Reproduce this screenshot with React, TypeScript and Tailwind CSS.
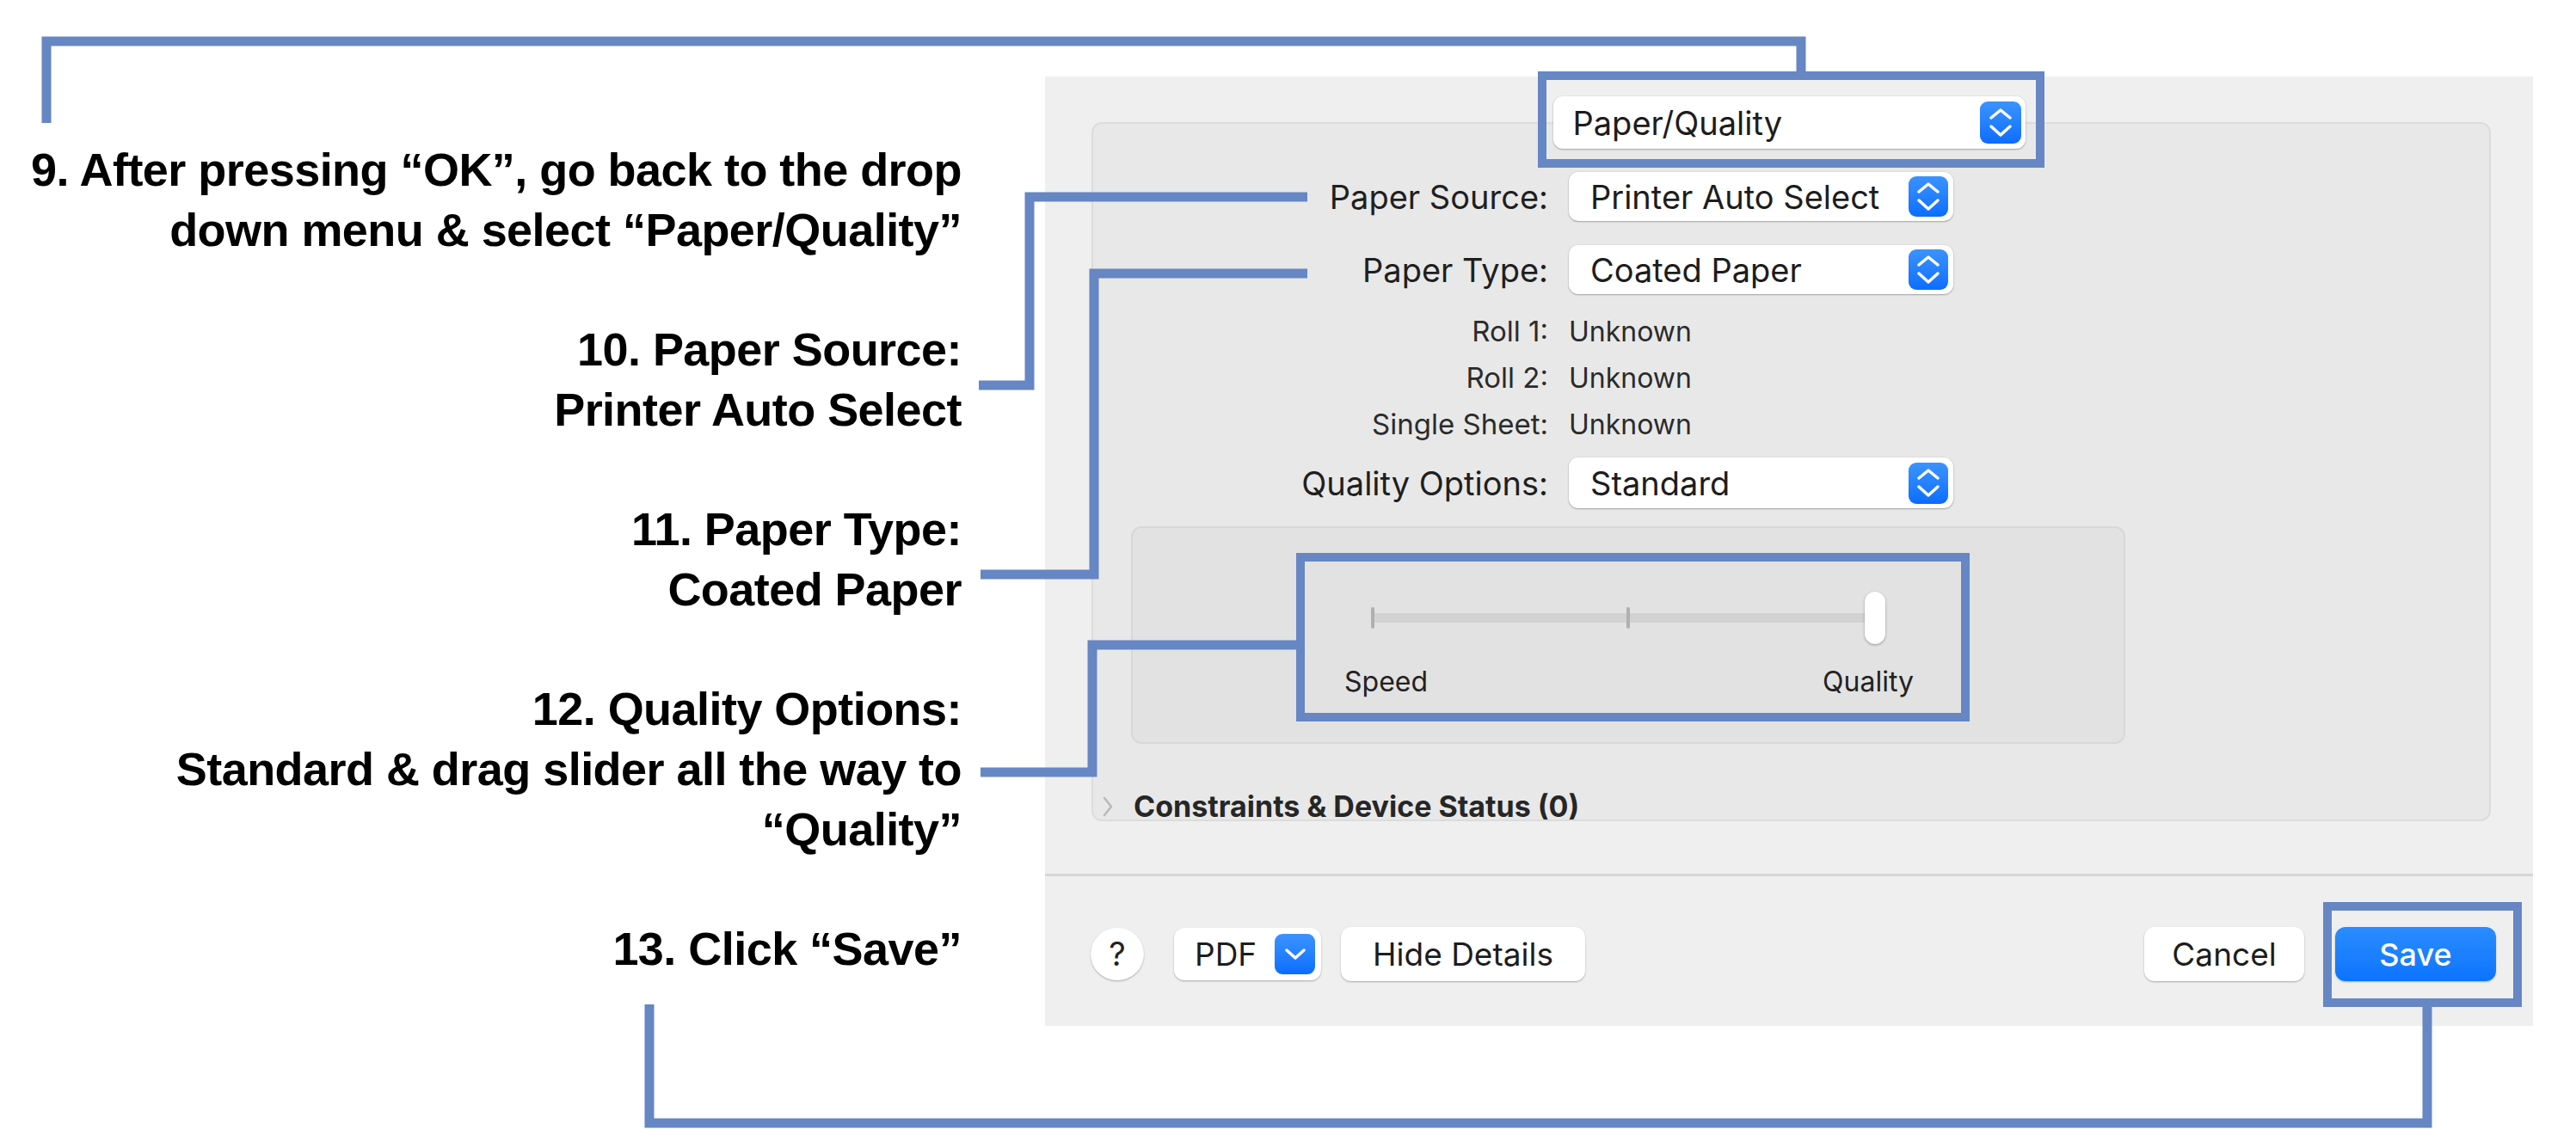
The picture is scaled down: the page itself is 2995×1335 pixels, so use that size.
import React from "react";

const UI = "font-['Inter','Liberation_Sans',sans-serif]";
const NOTE = "font-['Liberation_Sans','Arial',sans-serif]";
const LINE = "#6686c4";

export default function App() {
  return (
    <div className="relative w-[2995px] h-[1335px] bg-white overflow-hidden">
      <div className="flex">
        {/* Annotations */}
        <div
          className={`${NOTE} w-[1118px] shrink-0 pt-[162px] flex flex-col gap-[69px] text-right font-bold text-[54px] leading-[70px] tracking-[-0.01em] whitespace-nowrap text-black`}
        >
          <p>
            9. After pressing “OK”, go back to the drop
            <br />
            down menu &amp; select “Paper/Quality”
          </p>
          <p>
            10. Paper Source:
            <br />
            Printer Auto Select
          </p>
          <p>
            11. Paper Type:
            <br />
            Coated Paper
          </p>
          <p>
            12. Quality Options:
            <br />
            Standard &amp; drag slider all the way to
            <br />
            “Quality”
          </p>
          <p>13. Click “Save”</p>
        </div>

        {/* Print dialog */}
        <div className={`${UI} ml-[97px] mt-[89px] w-[1730px] h-[1104px] shrink-0 bg-[#efefef] flex flex-col`}>
          <div className="pt-[23px] flex justify-center relative z-10">
            <Popup text="Paper/Quality" className="w-[549px] h-[61px] pl-[23px] pr-[5px]" stepper="w-[48px] h-[49px]" />
          </div>

          <div className="-mt-[31px] ml-[54px] w-[1627px] h-[813px] shrink-0 rounded-[12px] border-2 border-[#dcdcdc] bg-[#e8e8e8] pt-[56px] flex flex-col">
            <FormRow label="Paper Source:">
              <Popup text="Printer Auto Select" className="w-[447px] h-[57px] pl-[25px] pr-[6px]" stepper="w-[46px] h-[47px]" />
            </FormRow>
            <div className="mt-[28px]">
              <FormRow label="Paper Type:">
                <Popup text="Coated Paper" className="w-[447px] h-[57px] pl-[25px] pr-[6px]" stepper="w-[46px] h-[47px]" />
              </FormRow>
            </div>
            <div className="mt-[17px]">
              <InfoRow label="Roll 1:" value="Unknown" />
              <InfoRow label="Roll 2:" value="Unknown" />
              <InfoRow label="Single Sheet:" value="Unknown" />
            </div>
            <div className="mt-[11px]">
              <FormRow label="Quality Options:">
                <Popup text="Standard" className="w-[447px] h-[59px] pl-[25px] pr-[6px]" stepper="w-[46px] h-[48px]" />
              </FormRow>
            </div>

            {/* Speed / Quality slider */}
            <div className="mt-[21px] ml-[44px] w-[1156px] h-[253px] shrink-0 rounded-[12px] border-2 border-[#d8d8d8] bg-[#e2e2e2] pt-[74px]">
              <div className="ml-[246px] w-[662px]">
                <div className="h-[61px] flex items-center pl-[31px]">
                  <div className="relative w-[585px] h-[11px] rounded-full bg-[#d2d2d2]">
                    <span className="absolute left-0 top-[-7px] w-[4px] h-[25px] rounded-full bg-[#b0b0b0]" />
                    <span className="absolute left-[297px] top-[-7px] w-[4px] h-[25px] rounded-full bg-[#b0b0b0]" />
                    <span className="absolute left-[574px] top-[-25px] w-[24px] h-[61px] rounded-full bg-white shadow-[0_1px_3px_rgba(0,0,0,0.35)]" />
                  </div>
                </div>
                <div className="mt-[24px] flex justify-between text-[32px] leading-[40px] text-[#222]">
                  <span>Speed</span>
                  <span>Quality</span>
                </div>
              </div>
            </div>

            <div className="mt-[53px] h-[40px] flex items-center">
              <svg width="12" height="24" viewBox="0 0 12 24" className="ml-[11px]">
                <path d="M2 2 L10 12 L2 22" fill="none" stroke="#b8b8b8" strokeWidth="2.5" strokeLinecap="round" strokeLinejoin="round" />
              </svg>
              <span className="ml-[24px] text-[34px] font-bold text-[#262626] leading-[40px]">
                Constraints &amp; Device Status (0)
              </span>
            </div>
          </div>

          {/* Footer */}
          <div className="mt-[61px] border-t-[3px] border-[#d6d6d6] pt-[59px] pl-[53px] pr-[43px] flex items-center">
            <button className="w-[62px] h-[61px] rounded-full bg-white shadow-[0_1px_2px_rgba(0,0,0,0.3)] text-[38px] text-[#222] flex items-center justify-center">
              ?
            </button>
            <button className="ml-[35px] w-[171px] h-[61px] rounded-[12px] bg-white shadow-[0_1px_2px_rgba(0,0,0,0.3)] flex items-center justify-between pl-[24px] pr-[7px]">
              <span className="text-[37px] text-[#1d1d1d]">PDF</span>
              <span className="w-[47px] h-[47px] rounded-[9px] bg-gradient-to-b from-[#3b93ff] to-[#0a6dff] flex items-center justify-center">
                <svg width="26" height="16" viewBox="0 0 26 16">
                  <path d="M3 3 L13 12 L23 3" fill="none" stroke="white" strokeWidth="3.5" strokeLinecap="round" strokeLinejoin="round" />
                </svg>
              </span>
            </button>
            <button className="ml-[23px] w-[284px] h-[63px] rounded-[12px] bg-white shadow-[0_1px_2px_rgba(0,0,0,0.3)] text-[37px] text-[#1d1d1d]">
              Hide Details
            </button>
            <div className="flex-1" />
            <button className="w-[186px] h-[63px] rounded-[12px] bg-white shadow-[0_1px_2px_rgba(0,0,0,0.3)] text-[37px] text-[#1d1d1d]">
              Cancel
            </button>
            <button className="ml-[36px] w-[187px] h-[63px] rounded-[12px] bg-gradient-to-b from-[#2a8cff] to-[#0a74ff] shadow-[0_1px_2px_rgba(0,0,0,0.25)] text-[36px] font-medium text-white">
              Save
            </button>
          </div>
        </div>
      </div>

      {/* Callout lines and highlight boxes */}
      <svg className="absolute inset-0 pointer-events-none" width="2995" height="1335" viewBox="0 0 2995 1335">
        <g fill="none" stroke={LINE} strokeWidth="11" strokeLinejoin="miter">
          <polyline points="54,143 54,48 2094,48 2094,84" />
          <polyline points="1138,448 1197,448 1197,229 1520,229" />
          <polyline points="1140,668 1272,668 1272,318 1520,318" />
          <polyline points="1140,898 1270,898 1270,750 1508,750" />
          <polyline points="755,1168 755,1306 2822,1306 2822,1170" />
        </g>
        <g fill="none" stroke={LINE} strokeWidth="10">
          <rect x="1793" y="88" width="579" height="102" />
          <rect x="1512" y="648" width="773" height="186" />
          <rect x="2706" y="1054" width="221" height="112" />
        </g>
      </svg>
    </div>
  );
}

function FormRow({ label, children }: { label: string; children: React.ReactNode }) {
  return (
    <div className="grid grid-cols-[529px_447px] gap-x-[24px] items-center">
      <span className="text-right text-[38px] leading-[44px] text-[#1f1f1f]">{label}</span>
      {children}
    </div>
  );
}

function InfoRow({ label, value }: { label: string; value: string }) {
  return (
    <div className="grid grid-cols-[529px_447px] gap-x-[24px] items-center h-[54px]">
      <span className="text-right text-[33px] text-[#2b2b2b]">{label}</span>
      <span className="text-[32px] text-[#2b2b2b]">{value}</span>
    </div>
  );
}

function Popup({ text, className, stepper }: { text: string; className: string; stepper: string }) {
  return (
    <div
      className={`flex items-center justify-between bg-white rounded-[11px] shadow-[0_1px_2px_rgba(0,0,0,0.28),0_0_0_1px_rgba(0,0,0,0.03)] ${className}`}
    >
      <span className="text-[38px] text-[#1d1d1d] leading-none">{text}</span>
      <span className={`rounded-[9px] bg-gradient-to-b from-[#3b93ff] to-[#0a6dff] flex items-center justify-center ${stepper}`}>
        <svg width="28" height="34" viewBox="0 0 28 34">
          <path d="M3 11 L14 2 L25 11" fill="none" stroke="white" strokeWidth="3.5" strokeLinecap="round" strokeLinejoin="round" />
          <path d="M3 21 L14 31 L25 21" fill="none" stroke="white" strokeWidth="3.5" strokeLinecap="round" strokeLinejoin="round" />
        </svg>
      </span>
    </div>
  );
}
